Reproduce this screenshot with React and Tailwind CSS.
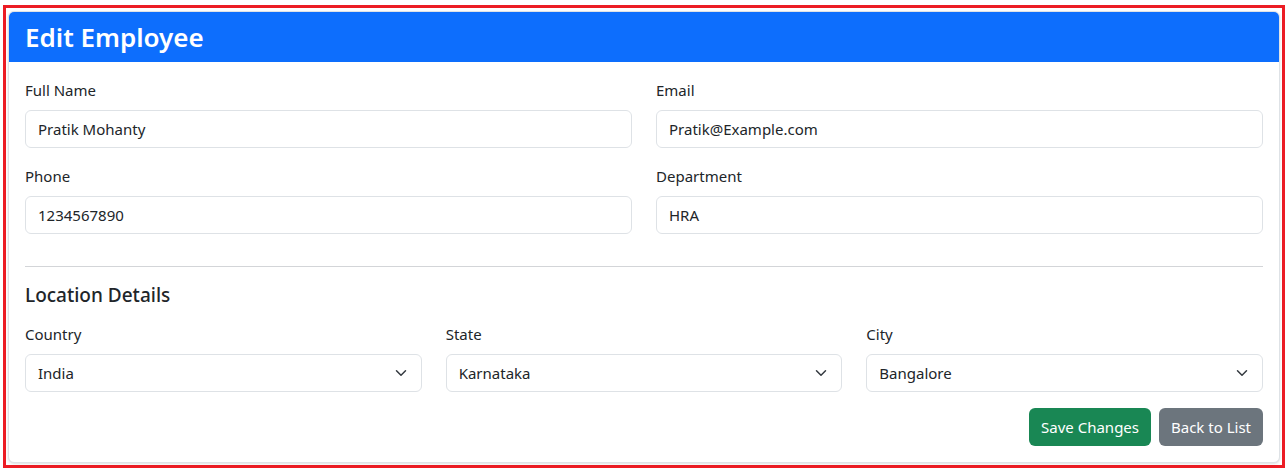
import React from 'react';

const Field = ({ label, value }) => (
  <div>
    <label className="block mb-2 leading-6 text-[#212529]">{label}</label>
    <input
      readOnly
      value={value}
      className="block w-full h-[38px] px-3 border border-[#dee2e6] rounded-md bg-white text-[#212529] outline-none"
    />
  </div>
);

const SelectField = ({ label, value }) => (
  <div>
    <label className="block mb-2 leading-6 text-[#212529]">{label}</label>
    <div className="flex items-center justify-between h-[38px] pl-3 pr-3 border border-[#dee2e6] rounded-md bg-white text-[#212529]">
      <span>{value}</span>
      <svg width="16" height="12" viewBox="0 0 16 16" fill="none" stroke="#343a40" strokeWidth="2" strokeLinecap="round" strokeLinejoin="round">
        <path d="m2 5 6 6 6-6" />
      </svg>
    </div>
  </div>
);

export default function App() {
  return (
    <div className="w-[1287px] h-[472px] bg-white pl-[3px] pt-[5px] font-['Noto_Sans','Open_Sans',sans-serif] text-[15px]">
      <div className="w-[1282px] h-[463px] border-[3px] border-[#ec1c24] pl-[2px] pr-[2px] pt-[3px] pb-[2px]">
        <div className="h-full border border-[#dee2e6] rounded-md shadow-sm overflow-hidden bg-white">
          <div className="h-[50px] bg-[#0d6efd] px-4 flex items-center">
            <h3 className="text-[26px] font-semibold text-white leading-none">Edit Employee</h3>
          </div>
          <div className="p-4">
            <div className="grid grid-cols-2 gap-x-6 gap-y-4">
              <Field label="Full Name" value="Pratik Mohanty" />
              <Field label="Email" value="Pratik@Example.com" />
              <Field label="Phone" value="1234567890" />
              <Field label="Department" value="HRA" />
            </div>
            <hr className="my-8 border-t border-[#d3d5d8]" />
            <h5 className="text-[19px] font-medium leading-6 text-[#212529] -mt-4 mb-[15px]">Location Details</h5>
            <div className="grid grid-cols-3 gap-6">
              <SelectField label="Country" value="India" />
              <SelectField label="State" value="Karnataka" />
              <SelectField label="City" value="Bangalore" />
            </div>
            <div className="flex justify-end gap-2 mt-4">
              <button className="h-[38px] px-3 rounded-md bg-[#198754] text-white">Save Changes</button>
              <button className="h-[38px] px-3 rounded-md bg-[#6c757d] text-white">Back to List</button>
            </div>
          </div>
        </div>
      </div>
    </div>
  );
}
